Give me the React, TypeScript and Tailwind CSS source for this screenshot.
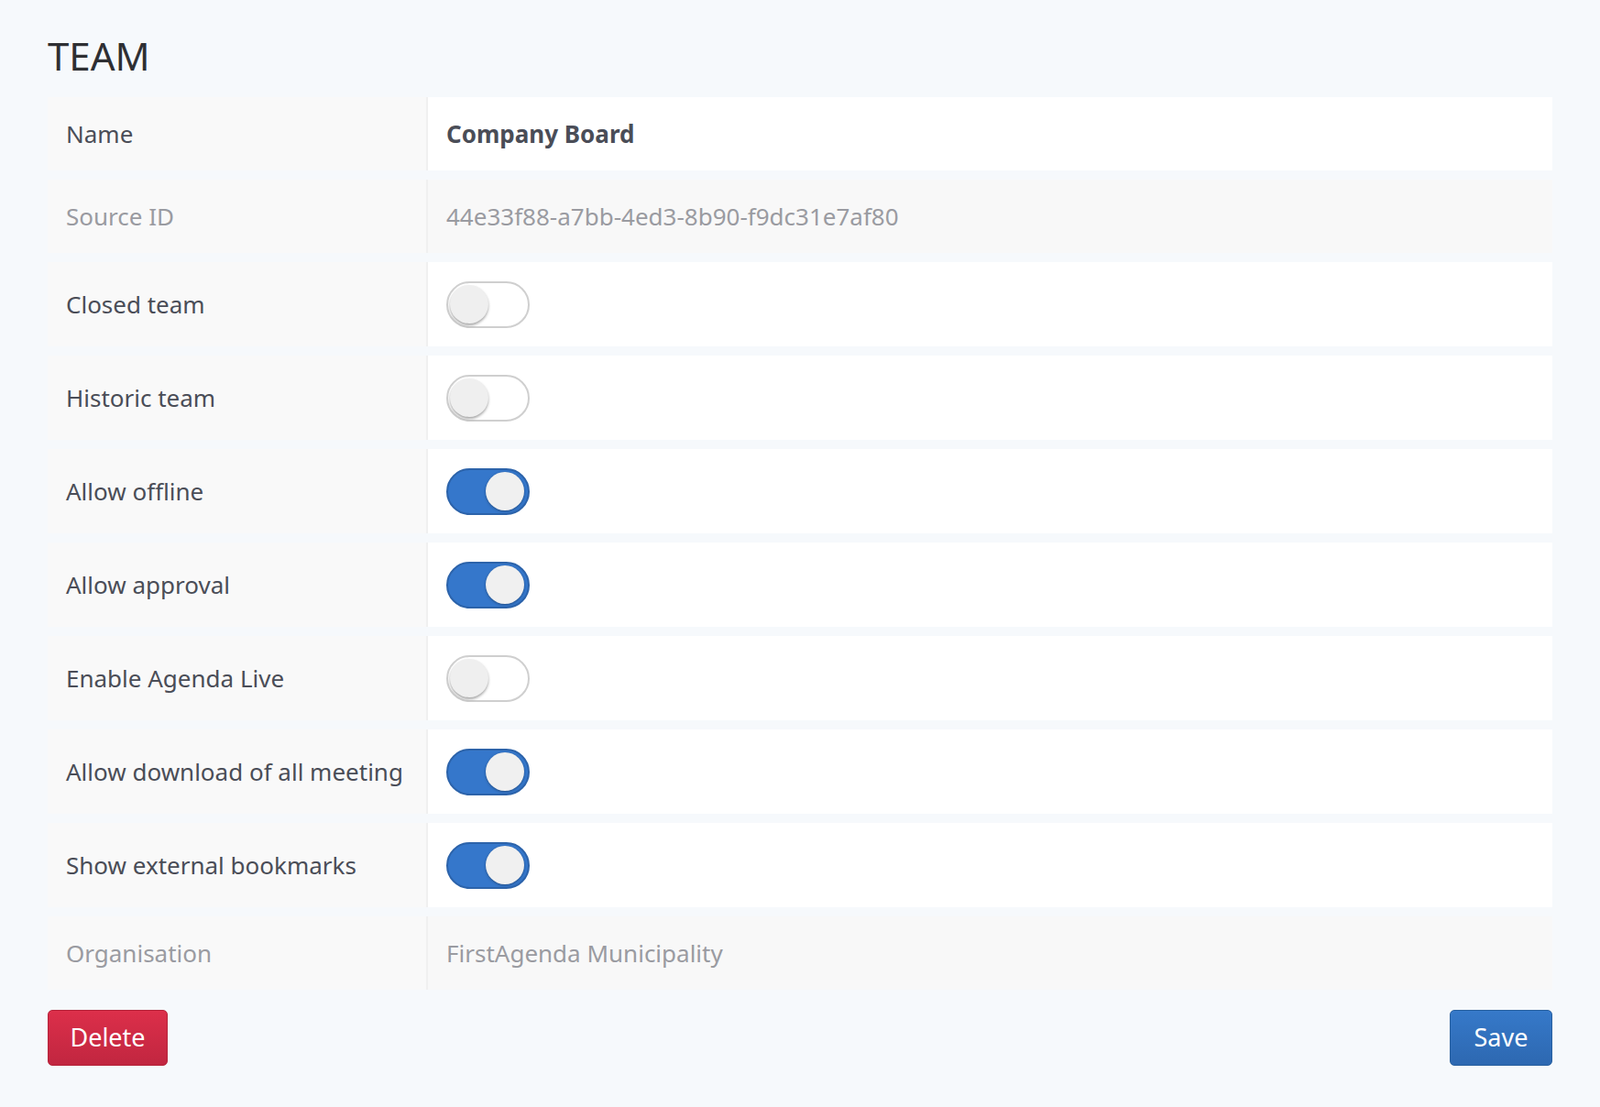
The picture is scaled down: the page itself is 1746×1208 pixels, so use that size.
const rows: { label: string; kind: "text" | "readonly" | "toggle"; value?: string; on?: boolean; bold?: boolean }[] = [
  { label: "Name", kind: "text", value: "Company Board", bold: true },
  { label: "Source ID", kind: "readonly", value: "44e33f88-a7bb-4ed3-8b90-f9dc31e7af80" },
  { label: "Closed team", kind: "toggle", on: false },
  { label: "Historic team", kind: "toggle", on: false },
  { label: "Allow offline", kind: "toggle", on: true },
  { label: "Allow approval", kind: "toggle", on: true },
  { label: "Enable Agenda Live", kind: "toggle", on: false },
  { label: "Allow download of all meeting", kind: "toggle", on: true },
  { label: "Show external bookmarks", kind: "toggle", on: true },
  { label: "Organisation", kind: "readonly", value: "FirstAgenda Municipality" },
];

function Toggle({ on }: { on: boolean }) {
  return on ? (
    <div className="w-[91px] h-[51px] rounded-full bg-[#3577cb] border-2 border-[#2c63aa] flex items-center justify-end pr-[4px]">
      <div className="w-[42px] h-[42px] rounded-full bg-[#f0f0f0] shadow-[0_1px_3px_rgba(0,0,0,0.35)]" />
    </div>
  ) : (
    <div className="w-[91px] h-[51px] rounded-full bg-white border-2 border-[#cfcfcf] flex items-center pl-[2px]">
      <div className="w-[42px] h-[42px] rounded-full bg-[#efefef] shadow-[0_2px_3px_rgba(0,0,0,0.35)]" />
    </div>
  );
}

export default function App() {
  return (
    <div className="min-h-[1208px] bg-[#f6f9fc] px-[52px] pt-[40px] font-['Roboto',sans-serif] text-[26px]">
      <h1 className="text-[42px] leading-none text-[#2e2f33] mb-[24px]">TEAM</h1>
      <div className="flex flex-col gap-[10px]">
        {rows.map((r) => {
          const ro = r.kind === "readonly";
          const h = r.kind === "toggle" ? "h-[92px]" : "h-[80px]";
          return (
            <div key={r.label} className={`flex ${h}`}>
              <div className={`w-[415px] shrink-0 bg-[#f9f9f9] border-r-2 border-[#f0f0f0] flex items-center pl-[20px] ${ro ? "text-[#9a9ba1]" : "text-[#4a4d57]"}`}>
                {r.label}
              </div>
              <div className={`flex-1 flex items-center pl-[20px] ${ro ? "bg-[#f8f8f8] text-[#9a9ba1]" : "bg-white text-[#4a4d57]"} ${r.bold ? "font-bold" : ""}`}>
                {r.kind === "toggle" ? <Toggle on={!!r.on} /> : r.value}
              </div>
            </div>
          );
        })}
      </div>
      <div className="flex justify-between mt-[22px]">
        <button className="h-[61px] w-[131px] rounded-[5px] bg-gradient-to-b from-[#dc2f4a] to-[#c12640] border border-[#b5233a] text-white text-[27px]">Delete</button>
        <button className="h-[61px] w-[112px] rounded-[5px] bg-gradient-to-b from-[#3679c9] to-[#2d68b1] border border-[#28609f] text-white text-[27px]">Save</button>
      </div>
    </div>
  );
}
